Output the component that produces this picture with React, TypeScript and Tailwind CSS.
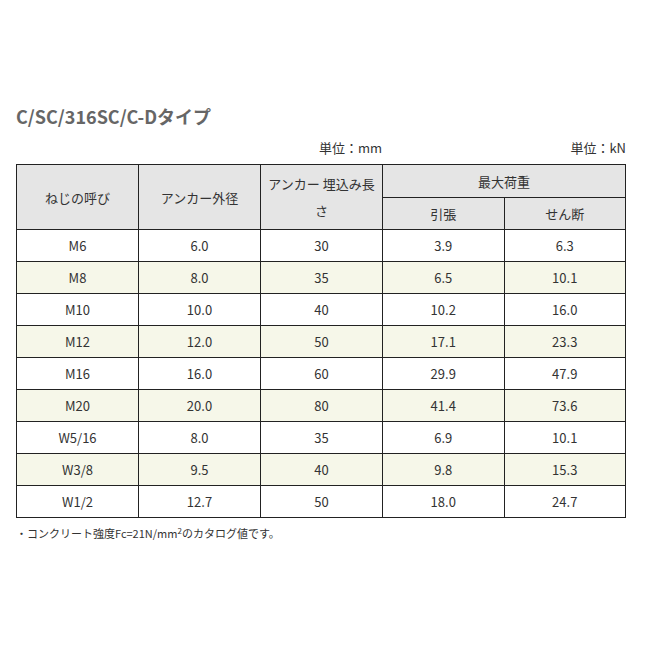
import React from "react";

const rows = [
  ["M6", "6.0", "30", "3.9", "6.3"],
  ["M8", "8.0", "35", "6.5", "10.1"],
  ["M10", "10.0", "40", "10.2", "16.0"],
  ["M12", "12.0", "50", "17.1", "23.3"],
  ["M16", "16.0", "60", "29.9", "47.9"],
  ["M20", "20.0", "80", "41.4", "73.6"],
  ["W5/16", "8.0", "35", "6.9", "10.1"],
  ["W3/8", "9.5", "40", "9.8", "15.3"],
  ["W1/2", "12.7", "50", "18.0", "24.7"],
];

const font = { fontFamily: '"Noto Sans CJK JP", "Noto Sans", sans-serif' };

export default function App() {
  return (
    <div className="min-h-screen bg-white px-[16px] pt-[102px] text-[#333]" style={font}>
      <h2 className="text-[18px] font-bold leading-[28px] text-[#666]">C/SC/316SC/C-Dタイプ</h2>

      <div className="mt-[8px] flex w-[610px] text-[13px] leading-[20px]">
        <div className="w-[366px] text-right">単位：mm</div>
        <div className="flex-1 text-right">単位：kN</div>
      </div>

      <table className="mt-[6px] w-[610px] table-fixed border-collapse text-center text-[13px] leading-[27px]">
        <thead>
          <tr className="bg-[#e5e5e5]">
            <th rowSpan={2} className="w-[122px] border border-[#222] px-1 font-normal">ねじの呼び</th>
            <th rowSpan={2} className="w-[122px] border border-[#222] px-1 font-normal">アンカー外径</th>
            <th rowSpan={2} className="w-[122px] border border-[#222] px-[2px] py-[4px] font-normal">アンカー 埋込み長さ</th>
            <th colSpan={2} className="h-[33px] border border-[#222] py-[2px] font-normal">最大荷重</th>
          </tr>
          <tr className="bg-[#e5e5e5]">
            <th className="w-[121px] border border-[#222] py-[2px] font-normal">引張</th>
            <th className="w-[122px] border border-[#222] py-[2px] font-normal">せん断</th>
          </tr>
        </thead>
        <tbody>
          {rows.map((r, i) => (
            <tr key={r[0]} className={i % 2 === 1 ? "bg-[#f6f7e9]" : "bg-white"}>
              {r.map((c, j) => (
                <td key={j} className="border border-[#222] py-[2px]">
                  {c}
                </td>
              ))}
            </tr>
          ))}
        </tbody>
      </table>

      <p className="mt-[6px] text-[11px] leading-[18px] text-[#333]">
        ・コンクリート強度Fc=21N/mm<sup className="text-[8px]">2</sup>のカタログ値です。
      </p>
    </div>
  );
}
